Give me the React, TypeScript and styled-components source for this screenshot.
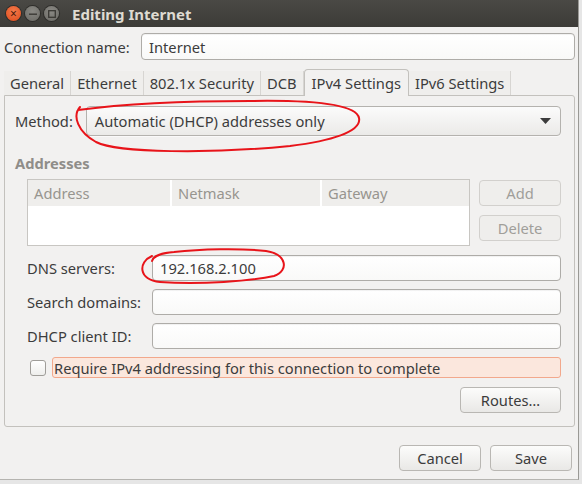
import styled, { createGlobalStyle } from 'styled-components';

const GlobalStyle = createGlobalStyle`
    html, body {
        margin: 0;
        padding: 0;
        background: #e9e9e9;
        font-family: "Noto Sans", "DejaVu Sans", sans-serif;
        font-size: 14.7px;
        color: #3c3c3c;
    }
`

const tabs = ['General', 'Ethernet', '802.1x Security', 'DCB', 'IPv4 Settings', 'IPv6 Settings']

const App = (): JSX.Element => {
    return (
        <Page>
            <GlobalStyle />
            <Window>
                <TitleBar>
                    <WinButton kind="close">×</WinButton>
                    <WinButton kind="min">
                        <svg width="8" height="8" viewBox="0 0 8 8"><rect x="0" y="3.5" width="8" height="1.4" fill="#3a3935" /></svg>
                    </WinButton>
                    <WinButton kind="max">
                        <svg width="8" height="8" viewBox="0 0 8 8"><rect x="0.7" y="0.7" width="6.6" height="6.6" fill="none" stroke="#3a3935" strokeWidth="1.3" /></svg>
                    </WinButton>
                    <Title>Editing Internet</Title>
                </TitleBar>

                <Body>
                    <NameRow>
                        <Label>Connection name:</Label>
                        <Entry value="Internet" />
                    </NameRow>

                    <TabBar>
                        {tabs.map((t) => (
                            <Tab key={t} active={t === 'IPv4 Settings'}>{t}</Tab>
                        ))}
                    </TabBar>

                    <Panel>
                        <MethodRow>
                            <Label>Method:</Label>
                            <Combo>
                                <span>Automatic (DHCP) addresses only</span>
                                <Arrow>
                                    <svg width="11" height="6" viewBox="0 0 11 6"><path d="M0 0 L11 0 L5.5 6 Z" fill="#3c3c3c" /></svg>
                                </Arrow>
                            </Combo>
                        </MethodRow>

                        <Heading>Addresses</Heading>

                        <AddressArea>
                            <Table>
                                <HeaderRow>
                                    <HeadCell w={144}>Address</HeadCell>
                                    <HeadCell w={150}>Netmask</HeadCell>
                                    <HeadCell w={147} last>Gateway</HeadCell>
                                </HeaderRow>
                            </Table>
                            <SideButtons>
                                <Button disabled>Add</Button>
                                <Button disabled>Delete</Button>
                            </SideButtons>
                        </AddressArea>

                        <FieldGrid>
                            <Label>DNS servers:</Label>
                            <Entry value="192.168.2.100" />
                            <Label>Search domains:</Label>
                            <Entry value="" />
                            <Label>DHCP client ID:</Label>
                            <Entry value="" />
                        </FieldGrid>

                        <CheckRow>
                            <CheckBox />
                            <CheckLabel>Require IPv4 addressing for this connection to complete</CheckLabel>
                        </CheckRow>

                        <RoutesRow>
                            <Button w={101}>Routes…</Button>
                        </RoutesRow>
                    </Panel>

                    <Footer>
                        <Button w={82}>Cancel</Button>
                        <Button w={82}>Save</Button>
                    </Footer>
                </Body>

                <Scribbles width="582" height="484" viewBox="0 0 582 484">
                    <path
                        d="M80 107 C72 116 78 132 96 142 C118 153 210 154 290 146 C330 141 362 132 359 118 C356 104 310 100 250 101 C190 101 130 103 78 110"
                        fill="none" stroke="#e8141a" strokeWidth="2" strokeLinecap="round"
                    />
                    <path
                        d="M152 256 C138 262 138 280 160 282 C200 285 252 281 274 276 C290 270 286 254 266 251 C240 248 200 249 174 252 C162 253 154 255 152 261"
                        fill="none" stroke="#e8141a" strokeWidth="2" strokeLinecap="round"
                    />
                </Scribbles>
            </Window>
        </Page>
    )
}

export default App

const Page = styled.div`
    width: 582px;
    height: 484px;
    overflow: hidden;
    background: #e6e6e6;
`

const Window = styled.div`
    position: relative;
    width: 578px;
    height: 479px;
    background: #f2f1f0;
    border-right: 1px solid #9a9995;
    border-bottom: 1px solid #b5b4b0;
    display: flex;
    flex-direction: column;
`

const TitleBar = styled.div`
    height: 27px;
    background: linear-gradient(#4a4945, #3c3b37);
    display: flex;
    align-items: center;
    padding-left: 6px;
    gap: 4px;
`

const WinButton = styled.div<{ kind: 'close' | 'min' | 'max' }>`
    width: 15px;
    height: 15px;
    border-radius: 50%;
    display: flex;
    align-items: center;
    justify-content: center;
    font-size: 12px;
    line-height: 1;
    color: #4a1a0c;
    background: ${(p) => (p.kind === 'close'
        ? 'radial-gradient(circle at 50% 35%, #f47a4a, #de4b1c)'
        : 'radial-gradient(circle at 50% 35%, #8a8984, #6a6964)')};
    box-shadow: 0 0 0 1px #2f2e2b;
`

const Title = styled.div`
    margin-left: 9px;
    font-weight: bold;
    font-size: 15px;
    color: #dfdbd2;
`

const Body = styled.div`
    flex: 1;
    display: flex;
    flex-direction: column;
    padding: 6px 3px 0 4px;
`

const Label = styled.div`
    font-size: 14.7px;
    color: #3c3c3c;
    white-space: nowrap;
`

const NameRow = styled.div`
    display: grid;
    grid-template-columns: 137px 1fr;
    align-items: center;
`

const Entry = styled.input.attrs({ readOnly: true })`
    height: 27px;
    box-sizing: border-box;
    border: 1px solid #aeaca8;
    border-radius: 4px;
    background: linear-gradient(#ffffff, #f9f9f8);
    box-shadow: inset 0 1px 1px rgba(0, 0, 0, 0.06);
    padding: 0 7px;
    font-family: inherit;
    font-size: 14.7px;
    color: #3c3c3c;
    outline: none;
    width: 100%;
`

const TabBar = styled.div`
    display: flex;
    align-items: flex-end;
    margin-top: 9px;
    height: 26px;
`

const Tab = styled.div<{ active?: boolean }>`
    box-sizing: border-box;
    height: ${(p) => (p.active ? '27px' : '24px')};
    padding: 0 ${(p) => (p.active ? '7px' : '6px')};
    display: flex;
    align-items: center;
    font-size: 14.7px;
    color: #3c3c3c;
    white-space: nowrap;
    margin-bottom: ${(p) => (p.active ? '-1px' : '0')};
    position: relative;
    z-index: ${(p) => (p.active ? 1 : 0)};
    background: ${(p) => (p.active ? '#f2f1f0' : '#efeeec')};
    border: ${(p) => (p.active ? '1px solid #c3c1bd' : 'none')};
    border-bottom: none;
    border-right: ${(p) => (p.active ? '1px solid #c3c1bd' : '1px solid #d7d5d2')};
    border-radius: ${(p) => (p.active ? '4px 4px 0 0' : '0')};
    &:first-child { padding-left: 6px; }
`

const Panel = styled.div`
    box-sizing: border-box;
    height: 332px;
    border: 1px solid #c3c1bd;
    border-radius: 0 3px 3px 3px;
    background: #f2f1f0;
    padding: 10px 13px 0 10px;
    display: flex;
    flex-direction: column;
`

const MethodRow = styled.div`
    display: flex;
    align-items: center;
    gap: 13px;
`

const Combo = styled.div`
    flex: 1;
    height: 30px;
    box-sizing: border-box;
    border: 1px solid #b4b2ae;
    border-radius: 4px;
    background: linear-gradient(#fbfbfb, #ebeae8);
    box-shadow: 0 1px 0 rgba(255, 255, 255, 0.6);
    display: flex;
    align-items: center;
    justify-content: space-between;
    padding: 0 9px 0 8px;
    font-size: 14.7px;
    color: #3c3c3c;
`

const Arrow = styled.span`
    display: flex;
    align-items: center;
`

const Heading = styled.div`
    margin-top: 17px;
    font-weight: bold;
    font-size: 14.7px;
    color: #8f8d89;
`

const AddressArea = styled.div`
    display: flex;
    gap: 9px;
    margin-top: 6px;
    padding-left: 12px;
`

const Table = styled.div`
    width: 443px;
    height: 67px;
    box-sizing: border-box;
    border: 1px solid #c8c6c2;
    background: #ffffff;
`

const HeaderRow = styled.div`
    display: flex;
    height: 26px;
    background: #efeeec;
`

const HeadCell = styled.div<{ w: number; last?: boolean }>`
    width: ${(p) => p.w}px;
    box-sizing: border-box;
    padding-left: 6px;
    display: flex;
    align-items: center;
    color: #97958f;
    font-size: 14.7px;
    border-right: ${(p) => (p.last ? 'none' : '2px solid #ffffff')};
`

const SideButtons = styled.div`
    display: flex;
    flex-direction: column;
    gap: 9px;
    padding-top: 1px;
`

const Button = styled.button<{ w?: number }>`
    width: ${(p) => (p.w ? `${p.w}px` : '82px')};
    height: 26px;
    border: 1px solid #b9b7b3;
    border-radius: 4px;
    background: linear-gradient(#fcfcfb, #e9e8e6);
    font-family: inherit;
    font-size: 14.7px;
    color: #3c3c3c;
    padding: 0;
    &:disabled {
        color: #a09e9a;
        background: #efeeec;
        border-color: #d2d0cd;
    }
`

const FieldGrid = styled.div`
    display: grid;
    grid-template-columns: 125px 1fr;
    row-gap: 8px;
    align-items: center;
    margin-top: 9px;
    padding-left: 12px;
    & > input { height: 26px; }
`

const CheckRow = styled.div`
    display: flex;
    align-items: center;
    gap: 6px;
    margin-top: 8px;
    padding-left: 15px;
`

const CheckBox = styled.div`
    width: 14px;
    height: 14px;
    border: 1px solid #9f9d99;
    border-radius: 3px;
    background: linear-gradient(#ffffff, #eeeeec);
`

const CheckLabel = styled.div`
    flex: 1;
    height: 21px;
    box-sizing: border-box;
    border: 1px solid #f2a88c;
    border-radius: 3px;
    background: #fbe7dd;
    display: flex;
    align-items: center;
    padding-left: 1px;
    font-size: 14.7px;
    color: #3c3c3c;
`

const RoutesRow = styled.div`
    display: flex;
    justify-content: flex-end;
    margin-top: 9px;
`

const Footer = styled.div`
    display: flex;
    justify-content: flex-end;
    gap: 9px;
    margin-top: 18px;
    padding-right: 3px;
`

const Scribbles = styled.svg`
    position: absolute;
    left: 0;
    top: 0;
    pointer-events: none;
`
